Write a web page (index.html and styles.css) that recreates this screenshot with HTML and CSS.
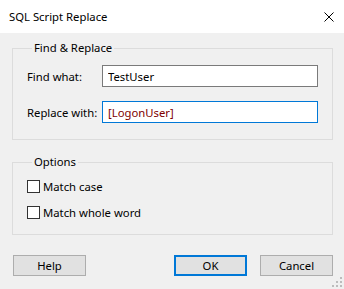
FILE: index.html
```html
<!DOCTYPE html>
<html lang="en">
<head>
    <meta charset="UTF-8">
    <title>SQL Script Replace</title>
    <link rel="stylesheet" href="styles.css">
</head>
<body>
    <div class="window">
        <div class="titlebar">
            <span class="title">SQL Script Replace</span>
            <span class="close">
                <svg width="10" height="10" viewBox="0 0 10 10">
                    <path d="M0.5 0.5 L9.5 9.5 M9.5 0.5 L0.5 9.5" stroke="#000" stroke-width="1" fill="none"/>
                </svg>
            </span>
        </div>

        <div class="content">
            <fieldset class="group find-group">
                <legend>Find &amp; Replace</legend>
                <div class="row">
                    <label for="findWhat">Find what:</label>
                    <input type="text" id="findWhat" class="field" value="TestUser">
                </div>
                <div class="row">
                    <label for="replaceWith">Replace with:</label>
                    <input type="text" id="replaceWith" class="field field-focus" value="[LogonUser]">
                </div>
            </fieldset>

            <fieldset class="group options-group">
                <legend>Options</legend>
                <label class="check"><input type="checkbox" class="box"> Match case</label>
                <label class="check"><input type="checkbox" class="box"> Match whole word</label>
            </fieldset>

            <div class="buttons">
                <button class="btn">Help</button>
                <div class="spacer"></div>
                <button class="btn btn-default">OK</button>
                <button class="btn">Cancel</button>
            </div>
        </div>

        <svg class="grip" width="10" height="10" viewBox="0 0 10 10">
            <rect x="8" y="0" width="2" height="2" fill="#bcbcbc"/>
            <rect x="4" y="4" width="2" height="2" fill="#bcbcbc"/>
            <rect x="8" y="4" width="2" height="2" fill="#bcbcbc"/>
            <rect x="0" y="8" width="2" height="2" fill="#bcbcbc"/>
            <rect x="4" y="8" width="2" height="2" fill="#bcbcbc"/>
            <rect x="8" y="8" width="2" height="2" fill="#bcbcbc"/>
        </svg>
    </div>
</body>
</html>
```

FILE: styles.css
```css
body {
    margin: 0;
    padding: 0;
    font-family: "Noto Sans", "Open Sans", sans-serif;
    font-size: 11.3px;
    color: #000000;
    background-color: #f0f0f0;
}

.window {
    position: relative;
    width: 344px;
    height: 289px;
    background-color: #f0f0f0;
    overflow: hidden;
}

.titlebar {
    display: flex;
    align-items: center;
    justify-content: space-between;
    height: 33px;
    padding: 0 10px 0 9px;
    background-color: #ffffff;
}

.title {
    font-size: 11.3px;
}

.close {
    display: flex;
    padding-top: 1px;
}

.content {
    padding: 7px 11px 0 12px;
}

.group {
    margin: 0;
    padding: 0 14px;
    border: 1px solid #dcdcdc;
}

.group legend {
    margin-left: 5px;
    padding: 0 2px;
    line-height: 16px;
}

.find-group {
    padding-top: 9px;
    padding-bottom: 16px;
    display: flex;
    flex-direction: column;
    gap: 14px;
}

.row {
    display: flex;
    align-items: center;
}

.row label {
    width: 75px;
}

.field {
    box-sizing: border-box;
    width: 216px;
    height: 22px;
    margin: 0;
    padding: 0 5px;
    border: 1px solid #7a7a7a;
    background: #ffffff;
    font-family: inherit;
    font-size: 11.3px;
    color: #000000;
    outline: none;
}

.field-focus {
    border-color: #0078d7;
    color: #800000;
}

.options-group {
    margin-top: 14px;
    padding-top: 10px;
    padding-bottom: 15px;
    display: flex;
    flex-direction: column;
    gap: 13px;
}

.check {
    display: flex;
    align-items: center;
    gap: 3px;
    height: 13px;
}

.box {
    appearance: none;
    -webkit-appearance: none;
    box-sizing: border-box;
    width: 13px;
    height: 13px;
    margin: 0;
    border: 1px solid #333333;
    background: #ffffff;
}

.buttons {
    display: flex;
    margin-top: 20px;
    padding-left: 1px;
    gap: 13px;
}

.spacer {
    flex: 1;
}

.btn {
    box-sizing: border-box;
    width: 73px;
    height: 21px;
    margin: 0;
    padding: 0;
    border: 1px solid #adadad;
    background-color: #e1e1e1;
    font-family: inherit;
    font-size: 11.3px;
    color: #000000;
}

.btn-default {
    border: 2px solid #0078d7;
}

.grip {
    position: absolute;
    right: 2px;
    bottom: 2px;
}
```
